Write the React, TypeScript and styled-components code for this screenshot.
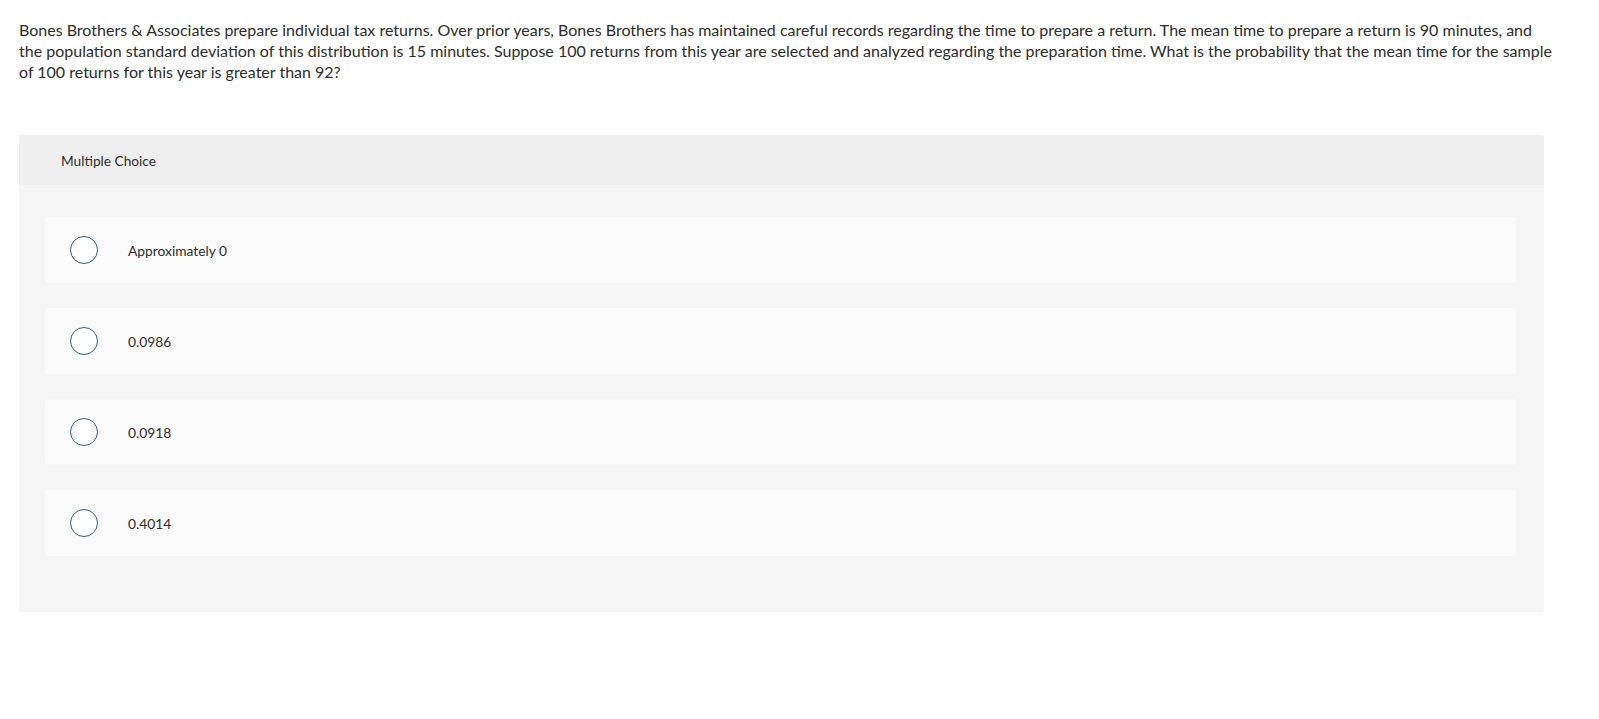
import React from "react";
import styled, { createGlobalStyle } from "styled-components";

const Global = createGlobalStyle`
  html, body { margin: 0; padding: 0; background: #ffffff; }
  body { font-family: Lato, "Open Sans", "Liberation Sans", sans-serif; color: #2d2d2d; }
`;

const Page = styled.div`
  padding: 19px 55px 40px 19px;
`;

const Question = styled.p`
  margin: 0 0 53px 0;
  font-size: 16px;
  line-height: 21px;
  color: #2d2d2d;
`;

const QuestionLine = styled.span`
  display: block;
  white-space: nowrap;
`;

const Panel = styled.section`
  background: #f5f5f5;
  border-radius: 3px;
  overflow: hidden;
`;

const PanelHeader = styled.header`
  background: #efefef;
  height: 50px;
  display: flex;
  align-items: center;
  padding-left: 42px;
  font-size: 13.7px;
  color: #2d2d2d;
`;

const Options = styled.div`
  display: flex;
  flex-direction: column;
  gap: 25px;
  padding: 32px 28px 56px 26px;
`;

const Option = styled.label`
  display: flex;
  align-items: center;
  height: 66px;
  background: #fafafa;
  border-radius: 3px;
  padding-left: 25px;
  cursor: pointer;
`;

const Radio = styled.span`
  width: 28px;
  height: 28px;
  box-sizing: border-box;
  border: 1.5px solid #2b5d8e;
  border-radius: 50%;
  background: #ffffff;
  flex: none;
`;

const Label = styled.span`
  margin-left: 30px;
  font-size: 13.8px;
  color: #2d2d2d;
`;

const questionLines = [
  "Bones Brothers & Associates prepare individual tax returns. Over prior years, Bones Brothers has maintained careful records regarding the time to prepare a return. The mean time to prepare a return is 90 minutes, and",
  "the population standard deviation of this distribution is 15 minutes. Suppose 100 returns from this year are selected and analyzed regarding the preparation time. What is the probability that the mean time for the sample",
  "of 100 returns for this year is greater than 92?",
];

const choices = ["Approximately 0", "0.0986", "0.0918", "0.4014"];

export default function App() {
  return (
    <>
      <Global />
      <Page>
        <Question>
          {questionLines.map((l) => (
            <QuestionLine key={l}>{l}</QuestionLine>
          ))}
        </Question>
        <Panel>
          <PanelHeader>Multiple Choice</PanelHeader>
          <Options>
            {choices.map((c) => (
              <Option key={c}>
                <Radio />
                <Label>{c}</Label>
              </Option>
            ))}
          </Options>
        </Panel>
      </Page>
    </>
  );
}
